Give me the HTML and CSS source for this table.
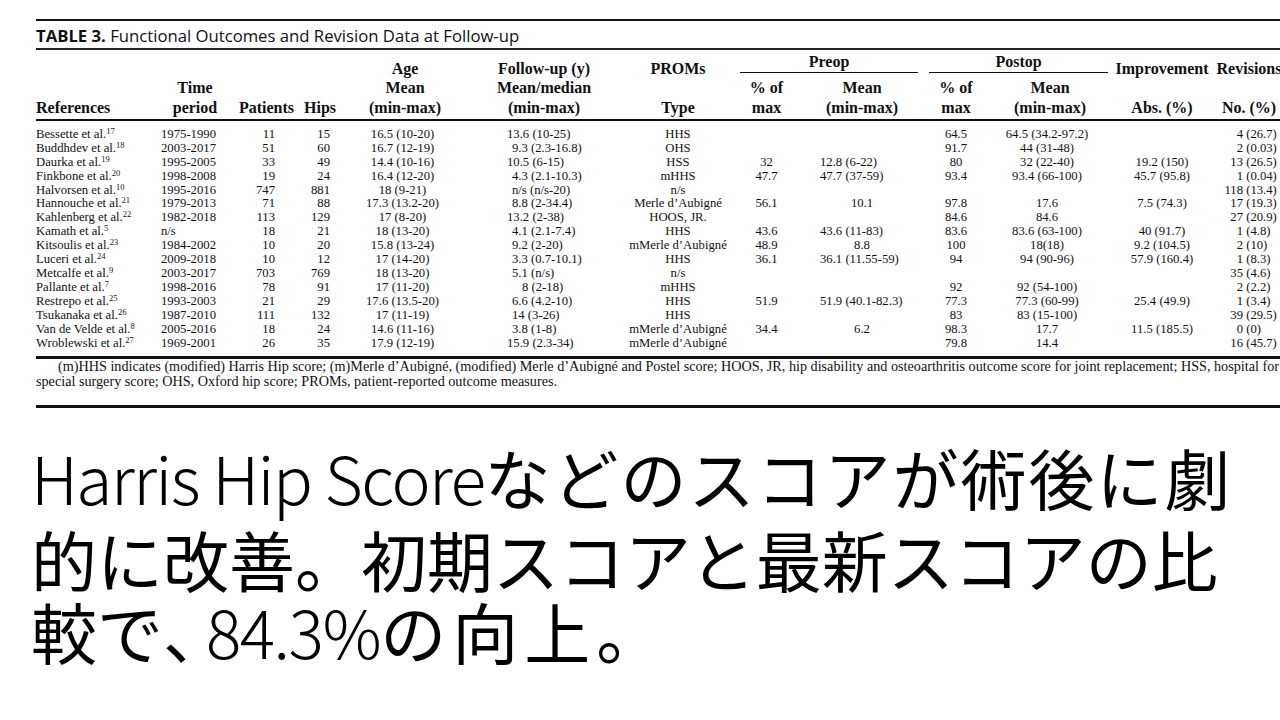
FILE: index.html
```html
<!DOCTYPE html>
<html lang="ja">
<head>
<meta charset="utf-8">
<title>Table 3</title>
<link rel="stylesheet" href="styles.css">
</head>
<body>
<main class="slide">
  <section class="figure">
    <div class="caption"><b>TABLE 3.</b> Functional Outcomes and Revision Data at Follow-up</div>
    <table class="data">
      <colgroup>
        <col class="w-ref"><col class="w-time"><col class="w-pat"><col class="w-hips"><col class="w-age"><col class="w-fu"><col class="w-prom"><col class="w-prp"><col class="w-prm"><col class="w-pop"><col class="w-pom"><col class="w-imp"><col class="w-rev">
      </colgroup>
      <thead>
        <tr class="h1">
          <th rowspan="2" class="left">References</th>
          <th rowspan="2">Time<br>period</th>
          <th rowspan="2">Patients</th>
          <th rowspan="2">Hips</th>
          <th rowspan="2">Age<br>Mean<br>(min-max)</th>
          <th rowspan="2">Follow-up (y)<br>Mean/median<br>(min-max)</th>
          <th rowspan="2">PROMs<br><br>Type</th>
          <th colspan="2" class="grp"><div class="grp-pre">Preop</div></th>
          <th colspan="2" class="grp"><div class="grp-post">Postop</div></th>
          <th rowspan="2">Improvement<br><br>Abs. (%)</th>
          <th rowspan="2">Revisions<br><br>No. (%)</th>
        </tr>
        <tr class="h2">
          <th>% of<br>max</th>
          <th>Mean<br>(min-max)</th>
          <th>% of<br>max</th>
          <th>Mean<br>(min-max)</th>
        </tr>
      </thead>
      <tbody>
        <tr><td>Bessette et al.<sup>17</sup></td><td>1975-1990</td><td>11</td><td>15</td><td>16.5 (10-20)</td><td>13.6 (10-25)</td><td>HHS</td><td></td><td></td><td>64.5</td><td>64.5 (34.2-97.2)</td><td></td><td><span class="n">4</span> (26.7)</td></tr>
        <tr><td>Buddhdev et al.<sup>18</sup></td><td>2003-2017</td><td>51</td><td>60</td><td>16.7 (12-19)</td><td class="i1">9.3 (2.3-16.8)</td><td>OHS</td><td></td><td></td><td>91.7</td><td>44 (31-48)</td><td></td><td><span class="n">2</span> (0.03)</td></tr>
        <tr><td>Daurka et al.<sup>19</sup></td><td>1995-2005</td><td>33</td><td>49</td><td>14.4 (10-16)</td><td>10.5 (6-15)</td><td>HSS</td><td>32</td><td>12.8 (6-22)</td><td>80</td><td>32 (22-40)</td><td>19.2 (150)</td><td><span class="n">13</span> (26.5)</td></tr>
        <tr><td>Finkbone et al.<sup>20</sup></td><td>1998-2008</td><td>19</td><td>24</td><td>16.4 (12-20)</td><td class="i1">4.3 (2.1-10.3)</td><td>mHHS</td><td>47.7</td><td>47.7 (37-59)</td><td>93.4</td><td>93.4 (66-100)</td><td>45.7 (95.8)</td><td><span class="n">1</span> (0.04)</td></tr>
        <tr><td>Halvorsen et al.<sup>10</sup></td><td>1995-2016</td><td>747</td><td>881</td><td>18 (9-21)</td><td class="i1">n/s (n/s-20)</td><td>n/s</td><td></td><td></td><td></td><td></td><td></td><td><span class="n">118</span> (13.4)</td></tr>
        <tr><td>Hannouche et al.<sup>21</sup></td><td>1979-2013</td><td>71</td><td>88</td><td>17.3 (13.2-20)</td><td class="i1">8.8 (2-34.4)</td><td>Merle d’Aubigné</td><td>56.1</td><td class="mid">10.1</td><td>97.8</td><td>17.6</td><td>7.5 (74.3)</td><td><span class="n">17</span> (19.3)</td></tr>
        <tr><td>Kahlenberg et al.<sup>22</sup></td><td>1982-2018</td><td>113</td><td>129</td><td>17 (8-20)</td><td>13.2 (2-38)</td><td>HOOS, JR.</td><td></td><td></td><td>84.6</td><td>84.6</td><td></td><td><span class="n">27</span> (20.9)</td></tr>
        <tr><td>Kamath et al.<sup>5</sup></td><td>n/s</td><td>18</td><td>21</td><td>18 (13-20)</td><td class="i1">4.1 (2.1-7.4)</td><td>HHS</td><td>43.6</td><td>43.6 (11-83)</td><td>83.6</td><td>83.6 (63-100)</td><td>40 (91.7)</td><td><span class="n">1</span> (4.8)</td></tr>
        <tr><td>Kitsoulis et al.<sup>23</sup></td><td>1984-2002</td><td>10</td><td>20</td><td>15.8 (13-24)</td><td class="i1">9.2 (2-20)</td><td>mMerle d’Aubigné</td><td>48.9</td><td class="mid">8.8</td><td>100</td><td>18(18)</td><td>9.2 (104.5)</td><td><span class="n">2</span> (10)</td></tr>
        <tr><td>Luceri et al.<sup>24</sup></td><td>2009-2018</td><td>10</td><td>12</td><td>17 (14-20)</td><td class="i1">3.3 (0.7-10.1)</td><td>HHS</td><td>36.1</td><td>36.1 (11.55-59)</td><td>94</td><td>94 (90-96)</td><td>57.9 (160.4)</td><td><span class="n">1</span> (8.3)</td></tr>
        <tr><td>Metcalfe et al.<sup>9</sup></td><td>2003-2017</td><td>703</td><td>769</td><td>18 (13-20)</td><td class="i1">5.1 (n/s)</td><td>n/s</td><td></td><td></td><td></td><td></td><td></td><td><span class="n">35</span> (4.6)</td></tr>
        <tr><td>Pallante et al.<sup>7</sup></td><td>1998-2016</td><td>78</td><td>91</td><td>17 (11-20)</td><td class="i2">8 (2-18)</td><td>mHHS</td><td></td><td></td><td>92</td><td>92 (54-100)</td><td></td><td><span class="n">2</span> (2.2)</td></tr>
        <tr><td>Restrepo et al.<sup>25</sup></td><td>1993-2003</td><td>21</td><td>29</td><td>17.6 (13.5-20)</td><td class="i1">6.6 (4.2-10)</td><td>HHS</td><td>51.9</td><td>51.9 (40.1-82.3)</td><td>77.3</td><td>77.3 (60-99)</td><td>25.4 (49.9)</td><td><span class="n">1</span> (3.4)</td></tr>
        <tr><td>Tsukanaka et al.<sup>26</sup></td><td>1987-2010</td><td>111</td><td>132</td><td>17 (11-19)</td><td class="i1">14 (3-26)</td><td>HHS</td><td></td><td></td><td>83</td><td>83 (15-100)</td><td></td><td><span class="n">39</span> (29.5)</td></tr>
        <tr><td>Van de Velde et al.<sup>8</sup></td><td>2005-2016</td><td>18</td><td>24</td><td>14.6 (11-16)</td><td class="i1">3.8 (1-8)</td><td>mMerle d’Aubigné</td><td>34.4</td><td class="mid">6.2</td><td>98.3</td><td>17.7</td><td>11.5 (185.5)</td><td><span class="n">0</span> (0)</td></tr>
        <tr><td>Wroblewski et al.<sup>27</sup></td><td>1969-2001</td><td>26</td><td>35</td><td>17.9 (12-19)</td><td>15.9 (2.3-34)</td><td>mMerle d’Aubigné</td><td></td><td></td><td>79.8</td><td>14.4</td><td></td><td><span class="n">16</span> (45.7)</td></tr>
      </tbody>
    </table>
    <div class="foot">
      <span class="foot-l1">(m)HHS indicates (modified) Harris Hip score; (m)Merle d’Aubigné, (modified) Merle d’Aubigné and Postel score; HOOS, JR, hip disability and osteoarthritis outcome score for joint replacement; HSS, hospital for</span>
      <span class="foot-l2">special surgery score; OHS, Oxford hip score; PROMs, patient-reported outcome measures.</span>
    </div>
  </section>
  <p class="body-text">
    <span class="line l1"><span class="lat">Harris Hip Score</span><span class="wide">などのスコアが術後に劇</span></span>
    <span class="line">的に改善。初期スコアと最新スコアの比</span>
    <span class="line">較で<span class="p">、</span><span class="lat">84.3%</span><span class="wider">の向上。</span></span>
  </p>
</main>
</body>
</html>
```

FILE: styles.css
```css
html, body {
  margin: 0;
  padding: 0;
  background: #fff;
}
body {
  width: 1280px;
  height: 720px;
  overflow: hidden;
}
.slide {
  display: flex;
  flex-direction: column;
}
.figure {
  margin-left: 36px;
  padding-top: 19px;
  width: 1253px;
  color: #111;
}
.caption {
  border-top: 2px solid #111;
  border-bottom: 2px solid #222;
  padding-top: 5px;
  padding-bottom: 2px;
  font-family: "Open Sans", "Liberation Sans", sans-serif;
  font-size: 16.7px;
  line-height: 20px;
  white-space: nowrap;
}
.caption b {
  font-weight: 700;
}
.data {
  table-layout: fixed;
  width: 1253px;
  border-collapse: separate;
  border-spacing: 0;
  font-family: "Liberation Serif", "Times New Roman", serif;
}
.w-ref { width: 119px; }
.w-time { width: 80px; }
.w-pat { width: 63px; }
.w-hips { width: 44px; }
.w-age { width: 126px; }
.w-fu { width: 152px; }
.w-prom { width: 116px; }
.w-prp { width: 61px; }
.w-prm { width: 130px; }
.w-pop { width: 58px; }
.w-pom { width: 130px; }
.w-imp { width: 94px; }
.w-rev { width: 80px; }

.data th {
  font-size: 16px;
  line-height: 19.5px;
  font-weight: 700;
  text-align: center;
  vertical-align: bottom;
  padding: 0 0 1.7px 0;
  white-space: nowrap;
}
.data th.left { text-align: left; }
.data tr.h1 { height: 28px; }
.data tr.h2 { height: 40.5px; }
.data th.grp {
  vertical-align: top;
  padding: 2.4px 0 0 0;
}
.grp-pre {
  margin: 0 9px 0 4px;
  border-bottom: 1px solid #111;
}
.grp-post {
  margin: 0 7px 0 2px;
  border-bottom: 1px solid #111;
}

.data td {
  font-size: 12.7px;
  line-height: 13.95px;
  padding: 0;
  white-space: nowrap;
  text-align: center;
  vertical-align: top;
}
.data tbody tr:first-child td {
  border-top: 2px solid #111;
  padding-top: 7px;
}
.data tbody tr:last-child td {
  border-bottom: 3px solid #111;
  padding-bottom: 5px;
}
.data td:nth-child(1) { text-align: left; }
.data td:nth-child(2) { text-align: left; padding-left: 6px; }
.data td:nth-child(3) { text-align: right; padding-right: 23px; }
.data td:nth-child(4) { text-align: right; padding-right: 12px; }
.data td:nth-child(5) { padding-right: 5px; }
.data td:nth-child(6) { text-align: left; padding-left: 39px; }
.data td:nth-child(6).i1 { padding-left: 44px; }
.data td:nth-child(6).i2 { padding-left: 54px; }
.data td:nth-child(9) { text-align: left; padding-left: 23px; }
.data td:nth-child(9).mid { text-align: center; padding-left: 0; }
.data td:nth-child(11) { padding-right: 6px; }
.data td:nth-child(13) { text-align: left; padding-left: 14px; }
.n {
  display: inline-block;
  width: 20px;
  text-align: right;
}
.data sup {
  font-size: 8.5px;
  line-height: 0;
  vertical-align: 4.5px;
}

.foot {
  font-family: "Liberation Serif", "Times New Roman", serif;
  font-size: 14.2px;
  line-height: 15px;
  padding-bottom: 16px;
  border-bottom: 3px solid #111;
}
.foot-l1 {
  display: block;
  text-indent: 22px;
  white-space: nowrap;
}
.foot-l2 {
  display: block;
  white-space: nowrap;
}

.body-text {
  margin: 32px 0 0 31px;
  font-family: "Noto Sans CJK JP", sans-serif;
  font-size: 66px;
  line-height: 72px;
  color: #000;
}
.body-text .line {
  display: block;
  white-space: nowrap;
}
.body-text .l1 {
  margin-bottom: 10px;
}
.body-text .lat {
  font-weight: 300;
  letter-spacing: -1.5px;
}
.body-text .wide {
  letter-spacing: 2px;
}
.body-text .wider {
  letter-spacing: 6px;
}
.body-text .p {
  font-feature-settings: "halt";
  margin-right: 10px;
}
```
